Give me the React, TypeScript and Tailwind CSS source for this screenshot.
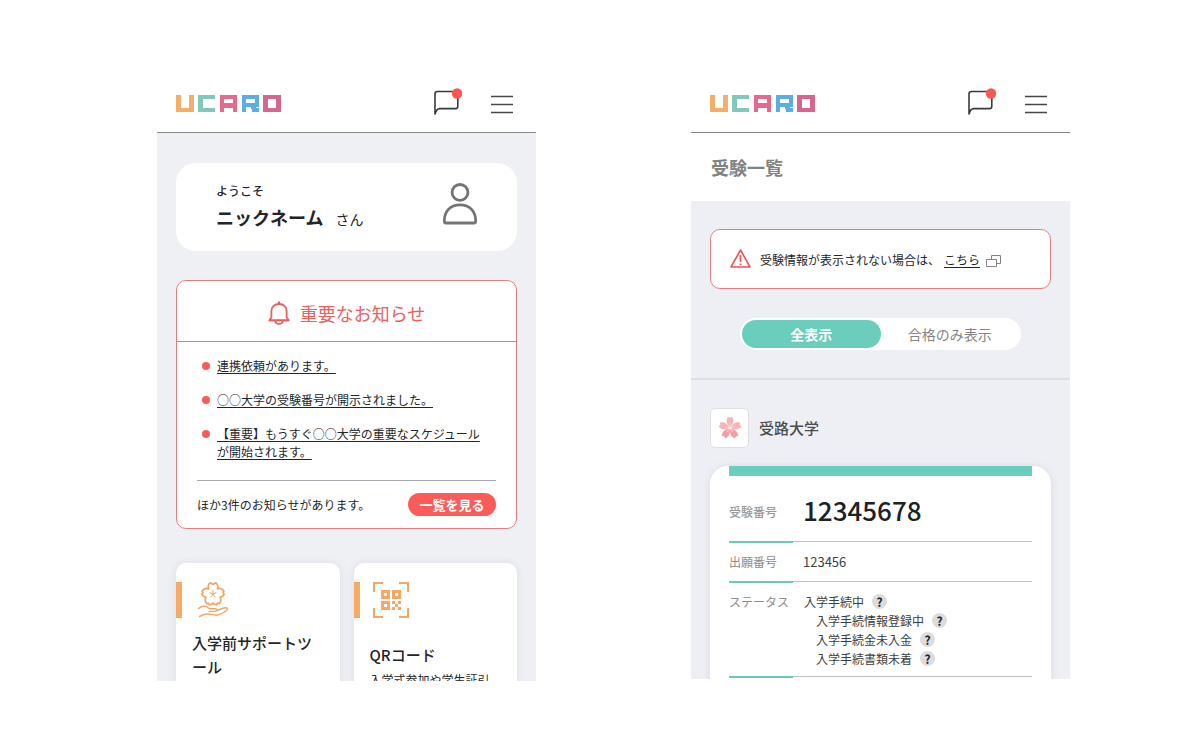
import { useState } from "react";
import type { ReactNode } from "react";

function Logo() {
  return (
    <svg width="105" height="17" viewBox="0 0 105 17" role="img" aria-label="UCARO" shapeRendering="crispEdges">
      <g fill="#f3ae68">
        <rect x="0" y="0" width="5" height="17" />
        <rect x="13" y="0" width="5" height="17" />
        <rect x="0" y="13" width="18" height="4" />
      </g>
      <g fill="#82c8bd">
        <rect x="22" y="0" width="5" height="17" />
        <rect x="22" y="0" width="17" height="4" />
        <rect x="22" y="13" width="17" height="4" />
      </g>
      <g fill="#e5698a">
        <rect x="44" y="0" width="4" height="17" />
        <rect x="57" y="0" width="4" height="17" />
        <rect x="44" y="0" width="17" height="4" />
        <rect x="44" y="8" width="17" height="5" />
      </g>
      <g fill="#5aaee0">
        <rect x="66" y="0" width="4" height="17" />
        <rect x="66" y="0" width="17" height="4" />
        <rect x="79" y="0" width="4" height="11" />
        <rect x="66" y="8" width="17" height="4" />
        <rect x="75" y="11" width="5" height="3" />
        <rect x="76" y="13" width="7" height="4" />
      </g>
      <g fill="#d4668f">
        <rect x="87" y="0" width="5" height="17" />
        <rect x="100" y="0" width="5" height="17" />
        <rect x="87" y="0" width="18" height="4" />
        <rect x="87" y="13" width="18" height="4" />
      </g>
    </svg>
  );
}

function Header() {
  return (
    <header className="flex h-[58px] items-center justify-between border-b border-[#858786] bg-white pr-[23px] pl-[19px]">
      <a href="#home" aria-label="ホーム">
        <Logo />
      </a>
      <div className="flex items-center gap-[29px]">
        <button type="button" aria-label="メッセージ">
          <svg width="28" height="31" viewBox="0 0 28 31" fill="none" className="block">
            <path
              d="M1 26 V6 Q1 3.5 3.5 3.5 H23.8 V18.2 Q23.8 20.6 21.4 20.6 H5.5 Q2.6 20.8 1 26 Z"
              stroke="#3a3b40"
              strokeWidth="1.6"
              strokeLinejoin="round"
            />
            <circle cx="23" cy="5.5" r="5.2" fill="#fb5653" />
          </svg>
        </button>
        <button type="button" aria-label="メニュー">
          <svg width="22" height="20" viewBox="0 0 22 20" className="block" stroke="#47484c" strokeWidth="1.3">
            <path d="M0 2.5 H22 M0 10.5 H22 M0 18.500 H22" />
          </svg>
        </button>
      </div>
    </header>
  );
}

function PersonIcon() {
  return (
    <svg width="36" height="42" viewBox="0 0 36 42" fill="none" stroke="#747474" strokeWidth="2.8" aria-hidden="true">
      <circle cx="18" cy="9.4" r="7.9" />
      <path d="M4 40 Q2.3 40 2.3 38 C2.3 28.5 8 21.8 18 21.8 C28 21.8 33.700 28.5 33.700 38 Q33.700 40 32 40 Z" />
    </svg>
  );
}

function BellIcon() {
  return (
    <svg width="22" height="24" viewBox="0 0 22 24" fill="none" stroke="#e8615f" strokeWidth="1.8" aria-hidden="true">
      <path d="M11 0.500 V3" strokeWidth="2.4" />
      <path d="M2 18.400 V19.400 H20 V18.400 L18.600 16.500 V10.500 C18.600 5.800 15.500 3 11 3 C6.500 3 3.400 5.800 3.400 10.500 V16.500 L2 18.400 Z" strokeLinejoin="round" />
      <path d="M0.500 19.300 H21.500 M7 19.500 C7.300 24 14.700 24 15 19.500" />
    </svg>
  );
}

function SupportIcon() {
  return (
    <svg width="36" height="36" viewBox="0 0 36 36" fill="none" stroke="#f0a566" strokeWidth="1.700" strokeLinecap="round" strokeLinejoin="round" aria-hidden="true">
      <path d="M18 2.400 L20.800 0.800 C23 2 23 5.300 22.400 7 C24.200 6.200 27 6.400 28.900 9 L28 10.500 L29.200 12.200 C28 14.600 26 15.200 25 15.400 C26 17 26 19.500 24.400 21.600 L22.500 21.200 L21.500 23 C19.300 22.600 18.500 21.800 18 21 C17.500 21.800 16.700 22.600 14.500 23 L13.500 21.200 L11.600 21.600 C10 19.500 10 17 11 15.400 C10 15.200 8 14.600 6.800 12.200 L8 10.500 L7.100 9 C9 6.400 11.800 6.200 13.600 7 C13 5.300 13 2 15.200 0.800 Z" />
      <path d="M18 12 V8.500 M18 12 L21 10.800 M18 12 L20 15 M18 12 L16 15 M18 12 L15 10.800" strokeWidth="1" />
      <path d="M3.500 26.500 C8 23 12 24.300 14.500 26.700 H20 C22 26.800 22.300 29 20.200 29.300 L14 29.500 M22 28.500 L29 26 C32 25.200 33.700 26.500 31.500 28.500 C28 31 25 32.800 22 33 C17 33.200 15.500 31.800 12 32 C9 32.200 7 33 4.500 34.700" strokeWidth="1.400" />
    </svg>
  );
}

function QrIcon() {
  return (
    <svg width="36" height="36" viewBox="0 0 36 36" fill="none" stroke="#f5a866" aria-hidden="true">
      <path d="M1 10 V1 H10 M26 1 H35 V10 M35 26 V35 H26 M10 35 H1 V26" strokeWidth="2" />
      <path d="M9.500 9.500 H15.500 V15.500 H9.500 Z M20.500 9.500 H26.500 V15.500 H20.500 Z M9.500 20.500 H15.500 V26.500 H9.500 Z" strokeWidth="3" />
      <path d="M19 19 H22 V22 H25 V19 H28 V22 H25 V25 H28 V28 H25 V25 H22 V28 H19 V25 H22 V22 H19 Z" fill="#f5a866" stroke="none" />
    </svg>
  );
}

function WarningIcon() {
  return (
    <svg width="21" height="21" viewBox="0 0 21 21" fill="none" stroke="#ea5457" strokeWidth="1.6" strokeLinejoin="round" aria-hidden="true">
      <path d="M10.500 1 L20 18 H1 Z" />
      <path d="M10.500 6 V13 M10.500 14.500 V16" strokeWidth="1.700" />
    </svg>
  );
}

function WindowsIcon() {
  return (
    <svg width="15" height="12" viewBox="0 0 15 12" fill="none" stroke="#808285" aria-hidden="true">
      <path d="M5.500 4 V0.500 H14.500 V8.500 H11" />
      <path d="M0.500 4.500 H10.500 V11.500 H0.500 Z" />
    </svg>
  );
}

const petalAngles = [0, 72, 144, 216, 288];

function SakuraIcon() {
  return (
    <svg width="24" height="24" viewBox="-12 -12 24 24" aria-hidden="true">
      {petalAngles.map((angle) => (
        <path
          key={angle}
          transform={`rotate(${angle})`}
          d="M0 -0.800 C-3 -3 -4.800 -7.500 -2 -11.200 L0 -10.200 L2 -11.200 C4.800 -7.500 3 -3 0 -0.800 Z"
          fill={angle === 144 || angle === 216 ? "#f3a0a3" : "#f6b4b6"}
        />
      ))}
      <path d="M0 0 V-5 M0 0 L4.700 -1.500 M0 0 L3 4 M0 0 L-3 4 M0 0 L-4.700 -1.500" stroke="#fbe0e0" strokeWidth="0.700" />
    </svg>
  );
}

const notices = [
  "連携依頼があります。",
  "○○大学の受験番号が開示されました。",
  "【重要】もうすぐ○○大学の重要なスケジュールが開始されます。",
];

function ToolCard({ icon, children }: { icon: ReactNode; children: ReactNode }) {
  return (
    <article className="rounded-[10px] bg-white pt-[19px] pb-10 shadow-[0_0_8px_rgba(60,70,110,0.10)]">
      <div className="flex h-9 items-center border-l-[6px] border-[#f8a963] pl-[13px]">{icon}</div>
      <div className="px-4">{children}</div>
    </article>
  );
}

function HomeScreen() {
  return (
    <section className="h-[606px] overflow-hidden bg-[#eff0f4]">
      <Header />
      <div className="flex flex-col px-[19px] pt-[30px]">
        <div className="flex h-[88px] items-center justify-between rounded-[20px] bg-white pr-[39px] pl-10">
          <div>
            <p className="text-xs leading-5 font-medium">ようこそ</p>
            <p className="flex items-baseline gap-3">
              <span className="text-lg leading-8 font-bold">ニックネーム</span>
              <span className="text-sm">さん</span>
            </p>
          </div>
          <div className="pb-1.5">
            <PersonIcon />
          </div>
        </div>

        <section className="mt-[29px] rounded-[10px] border border-[#e27f7e] bg-white">
          <h2 className="flex h-[61px] items-center justify-center gap-[10px] border-b border-[#e27f7e] pt-1 text-lg text-[#e8615f]">
            <BellIcon />
            重要なお知らせ
          </h2>
          <div className="px-5 pt-[15px] pb-3">
            <ul className="flex flex-col gap-4 pr-2 pl-[5px]">
              {notices.map((notice) => (
                <li key={notice} className="flex gap-[7px] text-xs leading-[18px]">
                  <span className="mt-[5px] size-2 shrink-0 rounded-full bg-[#fb5c5a]" />
                  <a href="#notice" className="underline underline-offset-2">
                    {notice}
                  </a>
                </li>
              ))}
            </ul>
            <div className="mt-[19px] flex items-center justify-between border-t border-[#a5a9b1] pt-3">
              <p className="text-xs">ほか3件のお知らせがあります。</p>
              <button type="button" className="h-[23px] w-[88px] rounded-full bg-[#fc5b5a] text-[13px] leading-[23px] font-bold text-white">
                一覧を見る
              </button>
            </div>
          </div>
        </section>

        <div className="mt-[34px] grid grid-cols-2 gap-[14px]">
          <ToolCard icon={<SupportIcon />}>
            <h3 className="mt-[13px] text-[15px] leading-6 font-medium">入学前サポートツール</h3>
          </ToolCard>
          <ToolCard icon={<QrIcon />}>
            <h3 className="mt-[25px] text-[15px] leading-6 font-medium">QRコード</h3>
            <p className="mt-1 text-xs leading-[18px]">入学式参加や学生証引</p>
          </ToolCard>
        </div>
      </div>
    </section>
  );
}

function FilterToggle() {
  const options = ["全表示", "合格のみ表示"];
  const [selected, setSelected] = useState(options[0]);
  return (
    <div className="mx-[30px] mt-[29px] grid h-8 grid-cols-2 rounded-full bg-white p-0.5 text-sm">
      {options.map((option) => (
        <button
          key={option}
          type="button"
          aria-pressed={option === selected}
          onClick={() => setSelected(option)}
          className={
            option === selected
              ? "rounded-full bg-[#6bcebd] font-bold text-white"
              : "rounded-full text-[#858585]"
          }
        >
          {option}
        </button>
      ))}
    </div>
  );
}

const statuses = [
  { label: "入学手続中", nested: false },
  { label: "入学手続情報登録中", nested: true },
  { label: "入学手続金未入金", nested: true },
  { label: "入学手続書類未着", nested: true },
];

function ExamScreen() {
  return (
    <section className="h-[604px] overflow-hidden bg-[#eeeff4]">
      <Header />
      <h1 className="h-[68px] bg-white px-5 text-lg leading-[68px] font-bold text-[#808382]">受験一覧</h1>
      <div className="px-[19px] pt-7">
        <div className="flex h-[60px] items-center rounded-[10px] border border-[#e27f7e] bg-white px-[19px] text-xs">
          <WarningIcon />
          <p className="flex gap-1 pt-0.5 pl-[9px]">
            受験情報が表示されない場合は、
            <a href="#help" className="underline underline-offset-2">
              こちら
            </a>
          </p>
          <span className="pt-1 pl-1.5">
            <WindowsIcon />
          </span>
        </div>
        <FilterToggle />
      </div>

      <div className="mt-7 border-t-2 border-[#dedfe2] px-[19px] pt-7">
        <div className="flex items-center gap-[10px]">
          <span className="flex h-10 w-[39px] items-center justify-center rounded-[5px] border border-[#dddfe3] bg-white">
            <SakuraIcon />
          </span>
          <h2 className="text-[15px] font-medium text-[#4a4c4e]">受路大学</h2>
        </div>

        <div className="mt-[18px] rounded-[18px] bg-white px-[19px] pb-10 shadow-[0_0_8px_rgba(60,70,110,0.10)]">
          <div className="h-[10px] bg-[#6bcebd]" />
          <dl className="text-xs text-[#3c3e40]">
            <div className="flex h-[67px]">
              <dt className="flex w-16 items-center border-b-2 border-[#6bc8ba] pt-1.5 font-medium text-[#999999]">受験番号</dt>
              <dd className="mb-px flex flex-1 items-center border-b border-[#bdc0c4] pt-1 pl-[10px] text-[26px] font-medium text-[#202124]">
                12345678
              </dd>
            </div>
            <div className="flex h-10">
              <dt className="flex w-16 items-center border-b-2 border-[#6bc8ba] text-[#8d8d8d]">出願番号</dt>
              <dd className="mb-px flex flex-1 items-center border-b border-[#bdc0c4] pl-[10px] text-[13px]">123456</dd>
            </div>
            <div className="flex h-[95px] leading-[19px]">
              <dt className="w-16 border-b-2 border-[#6bc8ba] pt-[9px] text-[#8d8d8d]">ステータス</dt>
              <dd className="mb-px flex-1 border-b border-[#bdc0c4] pt-[9px] pl-[11px]">
                <ul>
                  {statuses.map(({ label, nested }) => (
                    <li key={label} className={nested ? "flex items-center gap-2 pl-3" : "flex items-center gap-2"}>
                      {label}
                      <button
                        type="button"
                        aria-label={`${label}の説明`}
                        className="size-[15px] rounded-full bg-[#dcdcdc] text-center text-xs leading-[15px] font-bold text-[#202124]"
                      >
                        ?
                      </button>
                    </li>
                  ))}
                </ul>
              </dd>
            </div>
          </dl>
        </div>
      </div>
    </section>
  );
}

export default function App() {
  return (
    <main className="grid grid-cols-2 gap-[155px] bg-white pt-[75px] pr-[130px] pl-[157px] font-['Noto_Sans_CJK_JP',sans-serif] text-[#242528]">
      <HomeScreen />
      <ExamScreen />
    </main>
  );
}
